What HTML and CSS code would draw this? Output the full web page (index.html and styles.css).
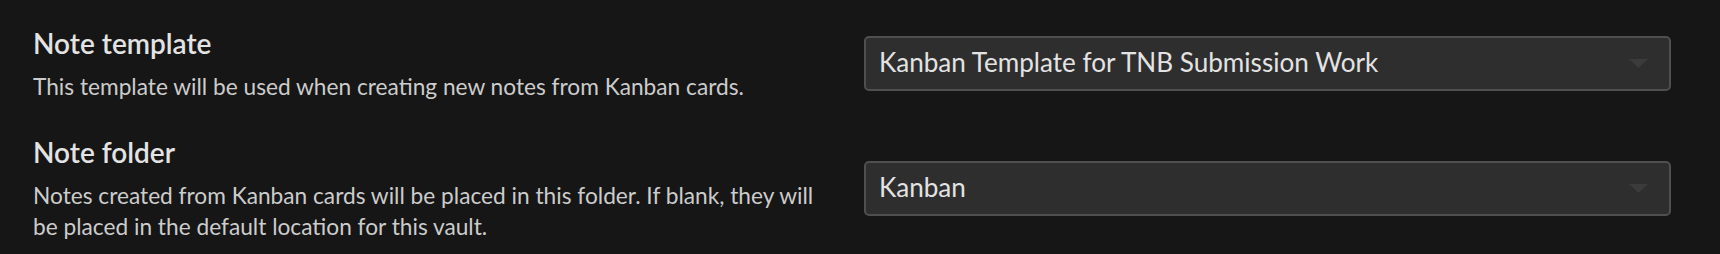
FILE: index.html
```html
<!DOCTYPE html>
<html>
<head>
<meta charset="utf-8">
<title>Kanban settings</title>
<link rel="stylesheet" href="styles.css">
</head>
<body>
<div class="settings">
  <div class="setting-item">
    <div class="setting-info">
      <div class="setting-name">Note template</div>
      <div class="setting-desc">This template will be used when creating new notes from Kanban cards.</div>
    </div>
    <div class="setting-control">
      <div class="dropdown">
        <span class="dropdown-value">Kanban Template for TNB Submission Work</span>
        <svg class="dropdown-arrow" width="19" height="9" viewBox="0 0 19 9"><path d="M0 0H19L9.5 9Z"/></svg>
      </div>
    </div>
  </div>
  <div class="setting-item">
    <div class="setting-info">
      <div class="setting-name">Note folder</div>
      <div class="setting-desc">Notes created from Kanban cards will be placed in this folder. If blank, they will be placed in the default location for this vault.</div>
    </div>
    <div class="setting-control">
      <div class="dropdown">
        <span class="dropdown-value">Kanban</span>
        <svg class="dropdown-arrow" width="19" height="9" viewBox="0 0 19 9"><path d="M0 0H19L9.5 9Z"/></svg>
      </div>
    </div>
  </div>
</div>
</body>
</html>
```
FILE: styles.css
```css
html, body {
  margin: 0;
  background: #161616;
}
body {
  font-family: "Lato", "Liberation Sans", sans-serif;
  -webkit-font-smoothing: antialiased;
}
.settings {
  display: flex;
  flex-direction: column;
  gap: 33.5px;
  padding: 26px 49px 0 33px;
}
.setting-item {
  display: flex;
  align-items: center;
}
.setting-info {
  flex: 1 1 auto;
  min-width: 0;
  padding-right: 30px;
}
.setting-name {
  font-size: 28px;
  font-weight: 600;
  line-height: 34px;
  color: #e3e3e3;
}
.setting-desc {
  margin-top: 10.5px;
  font-size: 22.7px;
  line-height: 31px;
  color: #cccccc;
}
.setting-control {
  flex: 0 0 807px;
}
.dropdown {
  box-sizing: border-box;
  height: 55px;
  display: flex;
  align-items: center;
  justify-content: space-between;
  padding: 0 21px 0 13px;
  background: #2e2e2e;
  border: 2px solid #4f4f4f;
  border-radius: 5px;
}
.dropdown-value {
  font-size: 26.1px;
  color: #e3e3e3;
  padding-bottom: 3px;
  white-space: nowrap;
}
.dropdown-arrow {
  flex: none;
  fill: #3b3b3b;
}
```
